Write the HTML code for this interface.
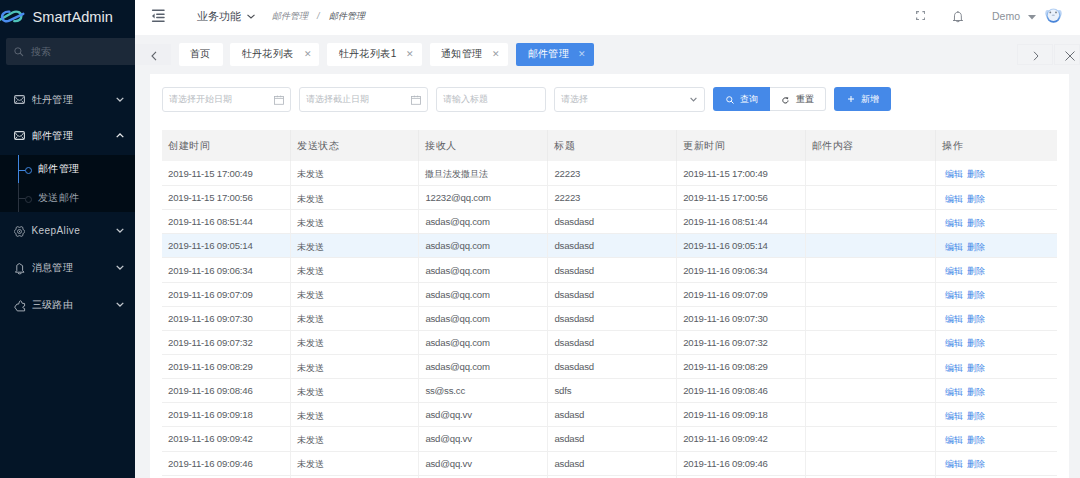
<!DOCTYPE html>
<html><head><meta charset="utf-8">
<style>
*{box-sizing:border-box;margin:0;padding:0}
html,body{width:1080px;height:478px;overflow:hidden;background:#f2f3f5;font-family:"Liberation Sans",sans-serif;}
.abs{position:absolute}
#side{position:absolute;left:0;top:0;width:135px;height:478px;background:#041527;}
.logo-text{position:absolute;left:32.5px;top:7px;font-size:14.6px;line-height:20px;color:#e6e8eb;letter-spacing:0}
.search{position:absolute;left:6px;top:38px;width:129px;height:27px;background:#1c2939;border-radius:2px 0 0 2px}
.search span{position:absolute;left:24.5px;top:7px;font-size:10px;line-height:13px;color:#5b6572}
.mi{position:absolute;left:0;width:135px;height:20px;color:#c4c9cf;font-size:10px;line-height:20px;letter-spacing:0.4px}
.mi .t{position:absolute;left:31.5px;top:0}
.mi svg.ic{position:absolute;left:14.3px;top:5px}
.mi svg.ch{position:absolute;left:115.5px;top:7px}
#sub{position:absolute;left:0;top:155px;width:135px;height:57px;background:#010c16}
#hdr{position:absolute;left:135px;top:0;width:945px;height:35px;background:#fff}
#tabs{position:absolute;left:135px;top:35px;width:945px;height:39px;background:#f2f3f5}
.tab{position:absolute;top:8px;height:22.5px;background:#fff;border-radius:2px;font-size:10px;letter-spacing:0.45px;line-height:22.5px;color:#3a3d42}
.tab .x{position:absolute;top:0;font-size:9px;color:#9aa0a6}
#card{position:absolute;left:150px;top:74px;width:919px;height:404px;background:#fff}
.inp{position:absolute;top:13.4px;height:24.4px;border:1px solid #dfe3e8;border-radius:3px;background:#fff}
.inp span{position:absolute;left:6px;top:4.8px;font-size:9.2px;line-height:12px;color:#b8bcc2}
.btn{position:absolute;top:13.4px;height:24px;font-size:9.2px;line-height:24px}
table{position:absolute;left:12px;top:55.7px;border-collapse:collapse;table-layout:fixed;width:895px}
th{height:31.7px;background:#f3f3f3;font-weight:normal;text-align:left;font-size:10px;letter-spacing:0.5px;color:#5f6266;padding-left:6px;border-left:1px solid #ebebeb}
td{height:24.15px;font-size:9.6px;letter-spacing:-0.2px;color:#585c63;padding-left:6px;border-left:1px solid #f0f0f0;border-bottom:1px solid #efefef;white-space:nowrap}
th:first-child,td:first-child{border-left:none}
tr.hl td{background:#ecf5fd}
td a{color:#4589e8;text-decoration:none}
td:last-child{padding-left:8.7px}
.c{position:relative;top:1.5px;letter-spacing:0;font-size:9px}
</style></head><body>
<div id="side">
  <svg class="abs" style="left:0;top:0" width="26" height="26" viewBox="0 0 26 26">
    <path d="M0 19.6 L12.6 12.5 C15.9 10.8 20.4 11.4 21.2 15.3 C21.9 19.1 18.6 21.5 14.3 21.1" fill="none" stroke="#4fc2b8" stroke-width="2.4" stroke-linecap="round"/>
    <path d="M9.4 11.7 C4.5 11.2 1.2 14.6 2.3 18.3 C3.2 21.2 6.4 22 9.2 20.6 L23.3 13.8" fill="none" stroke="#4a8cf0" stroke-width="2.4" stroke-linecap="round"/>
  </svg>
  <div class="logo-text">SmartAdmin</div>
  <div class="search">
    <svg class="abs" style="left:7.5px;top:9.3px" width="10" height="10" viewBox="0 0 10 10"><circle cx="3.9" cy="3.9" r="3.1" fill="none" stroke="#5b6572" stroke-width="1"/><path d="M6.2 6.2 L8.7 8.7" stroke="#5b6572" stroke-width="1.1" stroke-linecap="round"/></svg>
    <span>搜索</span>
  </div>
  <div class="mi" style="top:90px">
    <svg class="ic" width="11" height="9" viewBox="0 0 11 9"><rect x="0.6" y="0.6" width="9.8" height="7.8" rx="1.3" fill="none" stroke="#b2b9c2" stroke-width="1.1"/><path d="M1.3 1.8 Q5.5 9 9.7 1.8 M1.2 8.1 L3.3 5.6 M9.8 8.1 L7.7 5.6" fill="none" stroke="#b2b9c2" stroke-width="0.9"/></svg>
    <span class="t">牡丹管理</span>
    <svg class="ch" width="8" height="5" viewBox="0 0 8 5"><path d="M0.7 0.9 L4 4 L7.3 0.9" fill="none" stroke="#c4c9cf" stroke-width="1.3"/></svg>
  </div>
  <div class="mi" style="top:126px;color:#eceef0">
    <svg class="ic" width="11" height="9" viewBox="0 0 11 9"><rect x="0.6" y="0.6" width="9.8" height="7.8" rx="1.3" fill="none" stroke="#d5dade" stroke-width="1.1"/><path d="M1.3 1.8 Q5.5 9 9.7 1.8 M1.2 8.1 L3.3 5.6 M9.8 8.1 L7.7 5.6" fill="none" stroke="#d5dade" stroke-width="0.9"/></svg>
    <span class="t">邮件管理</span>
    <svg class="ch" width="8" height="5" viewBox="0 0 8 5"><path d="M0.7 4.1 L4 1 L7.3 4.1" fill="none" stroke="#e6e8ea" stroke-width="1.3"/></svg>
  </div>
  <div id="sub">
    <div class="abs" style="left:18px;top:0;width:1px;height:57px;background:#2b3440"></div>
    <div class="abs" style="left:18px;top:0;width:1.3px;height:28px;background:#3f86e0"></div>
    <div class="abs" style="left:18px;top:14.6px;width:7px;height:1.3px;background:#3f86e0"></div>
    <div class="abs" style="left:24.5px;top:11.7px;width:7px;height:7px;border:1.6px solid #3f86e0;border-radius:50%"></div>
    <div class="abs" style="left:18px;top:43.3px;width:7px;height:1px;background:#2b3440"></div>
    <div class="abs" style="left:24.5px;top:40.5px;width:7px;height:7px;border:1.2px solid #2b3440;border-radius:50%"></div>
    <div class="abs" style="left:38px;top:4px;letter-spacing:0.4px;font-size:10px;line-height:20px;color:#f2f3f5">邮件管理</div>
    <div class="abs" style="left:38px;top:33px;letter-spacing:0.4px;font-size:10px;line-height:20px;color:#9aa1aa">发送邮件</div>
  </div>
  <div class="mi" style="top:221px">
    <svg class="ic" width="11" height="11" style="left:14.1px;top:5px" viewBox="0 0 11 11"><path d="M10.85 5.50 L10.75 5.96 L10.47 6.38 L10.09 6.73 L9.68 7.02 L9.33 7.29 L9.09 7.57 L8.97 7.93 L8.91 8.36 L8.86 8.86 L8.75 9.37 L8.52 9.82 L8.18 10.13 L7.73 10.28 L7.23 10.25 L6.73 10.09 L6.27 9.88 L5.87 9.71 L5.50 9.65 L5.13 9.71 L4.73 9.88 L4.27 10.09 L3.77 10.25 L3.27 10.28 L2.83 10.13 L2.48 9.82 L2.25 9.37 L2.14 8.86 L2.09 8.36 L2.03 7.93 L1.91 7.58 L1.67 7.29 L1.32 7.02 L0.91 6.73 L0.53 6.38 L0.25 5.96 L0.15 5.50 L0.25 5.04 L0.53 4.62 L0.91 4.27 L1.32 3.98 L1.67 3.71 L1.91 3.42 L2.03 3.07 L2.09 2.64 L2.14 2.14 L2.25 1.63 L2.48 1.18 L2.82 0.87 L3.27 0.72 L3.77 0.75 L4.27 0.91 L4.73 1.12 L5.13 1.29 L5.50 1.35 L5.87 1.29 L6.27 1.12 L6.73 0.91 L7.23 0.75 L7.73 0.72 L8.17 0.87 L8.52 1.18 L8.75 1.63 L8.86 2.14 L8.91 2.64 L8.97 3.07 L9.09 3.43 L9.33 3.71 L9.68 3.98 L10.09 4.27 L10.47 4.62 L10.75 5.04 L10.85 5.50Z" fill="none" stroke="#b2b9c2" stroke-width="0.9"/><circle cx="5.5" cy="5.5" r="2" fill="none" stroke="#a3abb5" stroke-width="0.8"/><path d="M5 4.6 L6.4 5.5 L5 6.4 Z" fill="#a3abb5"/></svg>
    <span class="t">KeepAlive</span>
    <svg class="ch" width="8" height="5" viewBox="0 0 8 5"><path d="M0.7 0.9 L4 4 L7.3 0.9" fill="none" stroke="#c4c9cf" stroke-width="1.3"/></svg>
  </div>
  <div class="mi" style="top:258px">
    <svg class="ic" width="10" height="12" style="left:14.8px;top:4.8px" viewBox="0 0 10 12"><path d="M4.6 0.7 L7.6 2.7 L7.6 7.6 L9 9.2 L0.4 9.2 L1.8 7.6 L1.8 2.7 Z M3.3 10.6 Q4.7 11.4 6.1 10.6" fill="none" stroke="#b2b9c2" stroke-width="0.9" stroke-linejoin="round" stroke-linecap="round"/></svg>
    <span class="t">消息管理</span>
    <svg class="ch" width="8" height="5" viewBox="0 0 8 5"><path d="M0.7 0.9 L4 4 L7.3 0.9" fill="none" stroke="#c4c9cf" stroke-width="1.3"/></svg>
  </div>
  <div class="mi" style="top:295px">
    <svg class="ic" width="12" height="12" style="left:14px;top:4.5px" viewBox="0 0 12 12"><path d="M3.3 10.9 L0.7 7.1 L2.9 4.1 L4.6 4.1 L5.6 1.3 Q6.5 0.3 7.4 1.3 L8.1 3.2 L10.6 3.6 L10.6 6 Q8.8 6.4 8.8 7.3 Q8.8 8.1 10.6 8.6 L10.6 10.9 Z" fill="none" stroke="#b2b9c2" stroke-width="0.9" stroke-linejoin="round"/></svg>
    <span class="t">三级路由</span>
    <svg class="ch" width="8" height="5" viewBox="0 0 8 5"><path d="M0.7 0.9 L4 4 L7.3 0.9" fill="none" stroke="#c4c9cf" stroke-width="1.3"/></svg>
  </div>
</div>

<div id="hdr">
  <svg class="abs" style="left:16px;top:9px" width="15" height="15" viewBox="0 0 15 15"><path d="M1.6 1.3 H13 M5.8 5.3 H13 M5.8 8.5 H13 M1.6 12.3 H13" stroke="#58606c" stroke-width="1.5" stroke-linecap="round"/><path d="M1 6.9 L3.6 4.4 L3.6 9.4 Z" fill="#58606c"/></svg>
  <div class="abs" style="left:61.5px;top:7.7px;font-size:11.3px;line-height:16px;color:#474c56;font-weight:500">业务功能</div>
  <svg class="abs" style="left:111.5px;top:14px" width="8" height="5" viewBox="0 0 8 5"><path d="M0.5 0.8 L4 4 L7.5 0.8" fill="none" stroke="#4a4d53" stroke-width="1.1"/></svg>
  <div class="abs" style="left:137px;top:8.8px;font-size:9px;line-height:14px;color:#7d828a;font-style:italic">邮件管理</div>
  <div class="abs" style="left:182px;top:8.8px;font-size:9px;line-height:14px;color:#9aa0a6;font-style:italic">/</div>
  <div class="abs" style="left:194px;top:8.8px;font-size:9px;line-height:14px;color:#4a4f57;font-style:italic;font-weight:500">邮件管理</div>
  <svg class="abs" style="left:781px;top:11px" width="9.4" height="9.4" viewBox="0 0 9.4 9.4"><path d="M0.65 3 V0.65 H3 M6.4 0.65 H8.75 V3 M8.75 6.4 V8.75 H6.4 M3 8.75 H0.65 V6.4" fill="none" stroke="#8d939b" stroke-width="1.3"/></svg>
  <svg class="abs" style="left:818px;top:10.5px" width="10" height="12" viewBox="0 0 10 12"><path d="M1.4 9.4 L1.5 4.8 C1.5 2.5 3 1.2 4.9 1.2 C6.8 1.2 8.3 2.5 8.3 4.8 L8.4 9.4 M0.3 9.5 H9.5 M3.7 10.5 Q4.9 11.3 6.1 10.5 M4.9 0.3 V1.2" fill="none" stroke="#767c84" stroke-width="0.9" stroke-linecap="round"/></svg>
  <div class="abs" style="left:857px;top:9px;font-size:10.5px;line-height:14px;color:#8b9199">Demo</div>
  <svg class="abs" style="left:893px;top:14.5px" width="8" height="5" viewBox="0 0 8 5"><path d="M0 0 H8 L4 4.5 Z" fill="#8b9199"/></svg>
  <svg class="abs" style="left:908.8px;top:7px" width="20" height="18" viewBox="0 0 20 18">
    <defs><linearGradient id="ag" x1="0" y1="0" x2="0" y2="1"><stop offset="0" stop-color="#b9d3f4"/><stop offset="0.5" stop-color="#7eaee9"/><stop offset="1" stop-color="#3b7ad4"/></linearGradient></defs>
    <ellipse cx="3.6" cy="6.3" rx="2.3" ry="3.4" fill="#bcd5f5"/><ellipse cx="15.4" cy="6.3" rx="2.3" ry="3.4" fill="#bcd5f5"/>
    <circle cx="9.5" cy="8.7" r="7.1" fill="url(#ag)"/>
    <circle cx="9.4" cy="8.3" r="5.7" fill="#eaf1fb"/>
    <circle cx="6.3" cy="5.4" r="0.9" fill="#737b86"/><circle cx="12" cy="5.4" r="0.9" fill="#737b86"/>
    <ellipse cx="9.3" cy="8.2" rx="1.7" ry="0.75" fill="#b3c1d5"/>
  </svg>
</div>

<div id="tabs">
  <div class="abs" style="left:0;top:8.5px;width:36px;height:21.5px;background:#eff0f3"></div>
  <svg class="abs" style="left:16px;top:15.5px" width="6" height="10" viewBox="0 0 6 10"><path d="M5 0.8 L1 5 L5 9.2" fill="none" stroke="#5f636a" stroke-width="1.1"/></svg>
  <div class="tab" style="left:43.5px;width:44px"><span style="position:absolute;left:11.5px">首页</span></div>
  <div class="tab" style="left:95px;width:89px"><span style="position:absolute;left:11.5px">牡丹花列表</span><span class="x" style="left:74px">✕</span></div>
  <div class="tab" style="left:192px;width:94.5px"><span style="position:absolute;left:11.5px">牡丹花列表1</span><span class="x" style="left:79px">✕</span></div>
  <div class="tab" style="left:294.5px;width:78.5px"><span style="position:absolute;left:11.5px">通知管理</span><span class="x" style="left:62.5px">✕</span></div>
  <div class="tab" style="left:381px;width:78px;background:#4589e8;color:#fff"><span style="position:absolute;left:11.5px">邮件管理</span><span class="x" style="left:62px;color:#b9d3f5">✕</span></div>
  <div class="abs" style="left:882px;top:8.5px;width:35.5px;height:21.5px;background:#f2f3f5;border:1px solid #edeef1"></div>
  <div class="abs" style="left:919px;top:8.5px;width:26px;height:21.5px;background:#f2f3f5;border:1px solid #edeef1"></div>
  <svg class="abs" style="left:897.5px;top:15.5px" width="6" height="10" viewBox="0 0 6 10"><path d="M1 0.8 L5 5 L1 9.2" fill="none" stroke="#6a6e75" stroke-width="1"/></svg>
  <svg class="abs" style="left:929.5px;top:16px" width="10" height="10" viewBox="0 0 10 10"><path d="M0.5 0.5 L9.5 9.5 M9.5 0.5 L0.5 9.5" fill="none" stroke="#6a6e75" stroke-width="1"/></svg>
</div>

<div id="card">
  <div class="inp" style="left:12px;width:129px"><span>请选择开始日期</span>
    <svg class="abs" style="left:111.2px;top:6.6px" width="10" height="10" viewBox="0 0 10 10"><rect x="0.5" y="1.5" width="9" height="7.8" fill="none" stroke="#b3b8bf" stroke-width="0.85"/><path d="M0.5 3.4 H9.5 M3.4 0.6 V2.2 M6.6 0.6 V2.2" stroke="#b3b8bf" stroke-width="0.85"/></svg></div>
  <div class="inp" style="left:149px;width:129px"><span>请选择截止日期</span>
    <svg class="abs" style="left:111.2px;top:6.6px" width="10" height="10" viewBox="0 0 10 10"><rect x="0.5" y="1.5" width="9" height="7.8" fill="none" stroke="#b3b8bf" stroke-width="0.85"/><path d="M0.5 3.4 H9.5 M3.4 0.6 V2.2 M6.6 0.6 V2.2" stroke="#b3b8bf" stroke-width="0.85"/></svg></div>
  <div class="inp" style="left:286px;width:110px"><span>请输入标题</span></div>
  <div class="inp" style="left:404px;width:151px"><span>请选择</span>
    <svg class="abs" style="left:134.5px;top:8.6px" width="7" height="5" viewBox="0 0 7 5"><path d="M0.6 0.9 L3.5 3.8 L6.4 0.9" fill="none" stroke="#80858c" stroke-width="1.2"/></svg></div>
  <div class="btn" style="left:563px;width:57px;background:#4589e8;color:#fff;border-radius:3px 0 0 3px">
    <svg class="abs" style="left:13px;top:8.5px" width="8" height="8" viewBox="0 0 8 8"><circle cx="3.3" cy="3.3" r="2.6" fill="none" stroke="#fff" stroke-width="0.9"/><path d="M5.2 5.2 L7.5 7.5" stroke="#fff" stroke-width="1"/></svg>
    <span class="abs" style="left:26.5px;top:0">查询</span></div>
  <div class="btn" style="left:620px;width:56px;background:#fff;color:#4b4e54;border:1px solid #dfe3e8;border-left:none;border-radius:0 3px 3px 0">
    <svg class="abs" style="left:12px;top:8.5px" width="7" height="7" viewBox="0 0 7 7"><path d="M6 3.5 A2.6 2.6 0 1 1 5 1.4" fill="none" stroke="#3c3f44" stroke-width="1"/><path d="M4 0.3 L6.3 0.6 L5.8 2.6 Z" fill="#3c3f44"/></svg>
    <span class="abs" style="left:26px;top:-1px">重置</span></div>
  <div class="btn" style="left:683.5px;width:57px;background:#4589e8;color:#fff;border-radius:3px">
    <svg class="abs" style="left:14px;top:9px" width="6" height="6" viewBox="0 0 6 6"><path d="M3 0 V6 M0 3 H6" stroke="#fff" stroke-width="1"/></svg>
    <span class="abs" style="left:27px;top:0">新增</span></div>

  <table>
    <colgroup><col style="width:128.6px"><col style="width:128.3px"><col style="width:129.1px"><col style="width:128.7px"><col style="width:128.8px"><col style="width:130.1px"><col></colgroup>
    <tr><th>创建时间</th><th>发送状态</th><th>接收人</th><th>标题</th><th>更新时间</th><th>邮件内容</th><th>操作</th></tr>
    <tr><td>2019-11-15 17:00:49</td><td><span class="c">未发送</span></td><td><span class="c">撒旦法发撒旦法</span></td><td>22223</td><td>2019-11-15 17:00:49</td><td></td><td><span class="c"><a>编辑</a><a style="margin-left:4px">删除</a></span></td></tr>
    <tr><td>2019-11-15 17:00:56</td><td><span class="c">未发送</span></td><td>12232@qq.com</td><td>22223</td><td>2019-11-15 17:00:56</td><td></td><td><span class="c"><a>编辑</a><a style="margin-left:4px">删除</a></span></td></tr>
    <tr><td>2019-11-16 08:51:44</td><td><span class="c">未发送</span></td><td>asdas@qq.com</td><td>dsasdasd</td><td>2019-11-16 08:51:44</td><td></td><td><span class="c"><a>编辑</a><a style="margin-left:4px">删除</a></span></td></tr>
    <tr class="hl"><td>2019-11-16 09:05:14</td><td><span class="c">未发送</span></td><td>asdas@qq.com</td><td>dsasdasd</td><td>2019-11-16 09:05:14</td><td></td><td><span class="c"><a>编辑</a><a style="margin-left:4px">删除</a></span></td></tr>
    <tr><td>2019-11-16 09:06:34</td><td><span class="c">未发送</span></td><td>asdas@qq.com</td><td>dsasdasd</td><td>2019-11-16 09:06:34</td><td></td><td><span class="c"><a>编辑</a><a style="margin-left:4px">删除</a></span></td></tr>
    <tr><td>2019-11-16 09:07:09</td><td><span class="c">未发送</span></td><td>asdas@qq.com</td><td>dsasdasd</td><td>2019-11-16 09:07:09</td><td></td><td><span class="c"><a>编辑</a><a style="margin-left:4px">删除</a></span></td></tr>
    <tr><td>2019-11-16 09:07:30</td><td><span class="c">未发送</span></td><td>asdas@qq.com</td><td>dsasdasd</td><td>2019-11-16 09:07:30</td><td></td><td><span class="c"><a>编辑</a><a style="margin-left:4px">删除</a></span></td></tr>
    <tr><td>2019-11-16 09:07:32</td><td><span class="c">未发送</span></td><td>asdas@qq.com</td><td>dsasdasd</td><td>2019-11-16 09:07:32</td><td></td><td><span class="c"><a>编辑</a><a style="margin-left:4px">删除</a></span></td></tr>
    <tr><td>2019-11-16 09:08:29</td><td><span class="c">未发送</span></td><td>asdas@qq.com</td><td>dsasdasd</td><td>2019-11-16 09:08:29</td><td></td><td><span class="c"><a>编辑</a><a style="margin-left:4px">删除</a></span></td></tr>
    <tr><td>2019-11-16 09:08:46</td><td><span class="c">未发送</span></td><td>ss@ss.cc</td><td>sdfs</td><td>2019-11-16 09:08:46</td><td></td><td><span class="c"><a>编辑</a><a style="margin-left:4px">删除</a></span></td></tr>
    <tr><td>2019-11-16 09:09:18</td><td><span class="c">未发送</span></td><td>asd@qq.vv</td><td>asdasd</td><td>2019-11-16 09:09:18</td><td></td><td><span class="c"><a>编辑</a><a style="margin-left:4px">删除</a></span></td></tr>
    <tr><td>2019-11-16 09:09:42</td><td><span class="c">未发送</span></td><td>asd@qq.vv</td><td>asdasd</td><td>2019-11-16 09:09:42</td><td></td><td><span class="c"><a>编辑</a><a style="margin-left:4px">删除</a></span></td></tr>
    <tr><td>2019-11-16 09:09:46</td><td><span class="c">未发送</span></td><td>asd@qq.vv</td><td>asdasd</td><td>2019-11-16 09:09:46</td><td></td><td><span class="c"><a>编辑</a><a style="margin-left:4px">删除</a></span></td></tr>
    <tr><td>2019-11-16 09:10:02</td><td><span class="c">未发送</span></td><td>asd@qq.vv</td><td>asdasd</td><td>2019-11-16 09:10:02</td><td></td><td><span class="c"><a>编辑</a><a style="margin-left:4px">删除</a></span></td></tr>
  </table>
</div>
</body></html>
